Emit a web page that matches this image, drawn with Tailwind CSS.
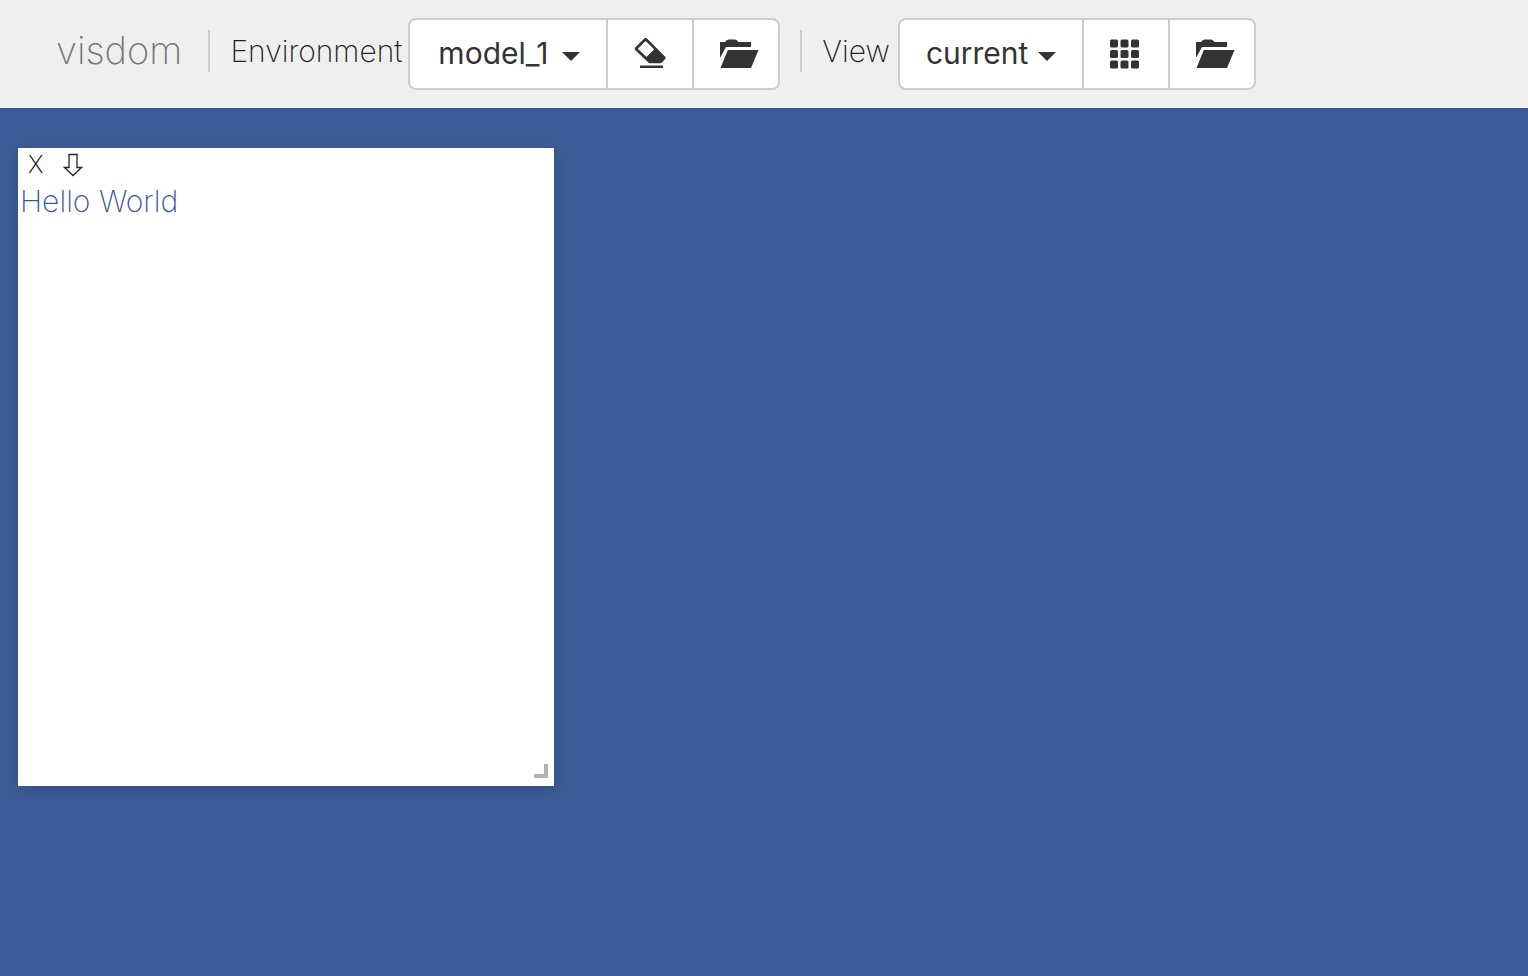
<!DOCTYPE html>
<html lang="en">
<head>
  <meta charset="utf-8">
  <meta name="viewport" content="width=device-width, initial-scale=1">
  <title>visdom</title>
  <script src="https://cdn.jsdelivr.net/npm/@tailwindcss/browser@4"></script>
</head>
<body class="min-h-screen bg-[#3d5a96] font-['Inter',sans-serif] font-extralight text-[#333]">
  <!-- Top bar -->
  <header class="flex items-center bg-[#efefef] py-[18px] pl-14">
    <a href="#" class="pb-2 text-[38px] leading-12 text-[#777]">visdom</a>
    <div class="mb-1.5 ml-[26px] h-[42px] w-0.5 bg-[#ccc]"></div>

    <!-- Environment controls -->
    <label for="env" class="mb-1.5 ml-5 text-[30px] leading-10 text-[#222]">Environment</label>
    <div class="ml-1.5 flex h-18 rounded-lg border-2 border-[#ccc] bg-white">
      <div class="relative flex">
        <select id="env" class="w-[196px] appearance-none rounded-l-lg bg-white pb-0.5 pl-7 text-[30px] font-normal">
          <option>model_1</option>
        </select>
        <svg class="pointer-events-none absolute top-8 right-[26px] h-[9px] w-[18px]" viewBox="0 0 18 9" fill="#333"><path d="M0 0h18L9 9z"/></svg>
      </div>
      <button type="button" aria-label="Clear environment" class="flex w-[86px] items-center justify-center border-l-2 border-[#ccc]">
        <svg class="h-8 w-8" viewBox="0 0 32 32">
          <path d="M10.300 0.400 1.200 9.500q-1.200 1.300 0 2.600L14 24.300q1 .9 2.300.9h9.500q1.300 0 2.200-.9l3.200-3.300q.9-1.200 0-2.300L13 .4q-1.300-1.100-2.700 0z" fill="#333"/>
          <path d="M11.600 2.900 3.800 10.700 12.500 19 20.100 11.300z" fill="#fff"/>
          <path d="M6 27.500h23V30H6z" fill="#333"/>
        </svg>
      </button>
      <button type="button" aria-label="Manage environments" class="flex w-[86px] items-center justify-center border-l-2 border-[#ccc] pl-1.5">
        <svg class="h-8 w-10" viewBox="0 0 40 32" fill="#333">
          <path d="M1 19V4h5q1.500-2.500 3.500-2.500h6.500q2 0 3.500 2.500H32v5H7L1.500 19z"/>
          <path d="M8.800 12H39.500L32 30H1.500z"/>
        </svg>
      </button>
    </div>

    <div class="mb-1.5 ml-5 h-[42px] w-0.5 bg-[#ccc]"></div>

    <!-- View controls -->
    <label for="view" class="mb-1.5 ml-5 text-[30px] leading-10 text-[#222]">View</label>
    <div class="ml-2 flex h-18 rounded-lg border-2 border-[#ccc] bg-white">
      <div class="relative flex">
        <select id="view" class="w-[182px] appearance-none rounded-l-lg bg-white pb-0.5 pl-[26px] text-[30px] font-normal">
          <option>current</option>
        </select>
        <svg class="pointer-events-none absolute top-8 right-[26px] h-[9px] w-[18px]" viewBox="0 0 18 9" fill="#333"><path d="M0 0h18L9 9z"/></svg>
      </div>
      <button type="button" aria-label="Repack windows" class="flex w-[86px] items-center justify-center border-l-2 border-[#ccc] pr-0.5">
        <svg class="h-[30px] w-[30px]" viewBox="0 0 30 30" fill="#333">
          <rect x="0" y="0.500" width="8" height="8" rx="1.500"/><rect x="10.500" y="0.500" width="8" height="8" rx="1.500"/><rect x="21" y="0.500" width="8" height="8" rx="1.500"/>
          <rect x="0" y="11" width="8" height="8" rx="1.500"/><rect x="10.500" y="11" width="8" height="8" rx="1.500"/><rect x="21" y="11" width="8" height="8" rx="1.500"/>
          <rect x="0" y="21.500" width="8" height="8" rx="1.500"/><rect x="10.500" y="21.500" width="8" height="8" rx="1.500"/><rect x="21" y="21.500" width="8" height="8" rx="1.500"/>
        </svg>
      </button>
      <button type="button" aria-label="Manage views" class="flex w-[86px] items-center justify-center border-l-2 border-[#ccc] pl-1.5">
        <svg class="h-8 w-10" viewBox="0 0 40 32" fill="#333">
          <path d="M1 19V4h5q1.500-2.500 3.500-2.500h6.500q2 0 3.500 2.500H32v5H7L1.500 19z"/>
          <path d="M8.800 12H39.500L32 30H1.500z"/>
        </svg>
      </button>
    </div>
  </header>

  <!-- Panes -->
  <main class="px-[18px] pt-10">
    <section class="flex h-[638px] w-[536px] flex-col bg-white shadow-[0_4px_12px_rgba(0,0,0,0.12)]">
      <div class="flex h-[34px] items-center gap-5 pl-2.5 text-black">
        <button type="button" class="text-2xl leading-8">X</button>
        <button type="button" aria-label="Save pane">
          <svg class="h-6 w-5" viewBox="0 0 20 24" fill="none" stroke="#222" stroke-width="1.300"><path d="M6 1.500h8v13h4.500L10 22.500 1.500 14.500H6z"/></svg>
        </button>
      </div>
      <p class="flex-1 pl-0.5 text-[30px] leading-[38px] text-[#3b5998]">Hello World</p>
      <div class="mr-1.5 mb-2 h-3.5 w-3.5 self-end border-r-4 border-b-4 border-[#b2b2b2]"></div>
    </section>
  </main>
</body>
</html>
